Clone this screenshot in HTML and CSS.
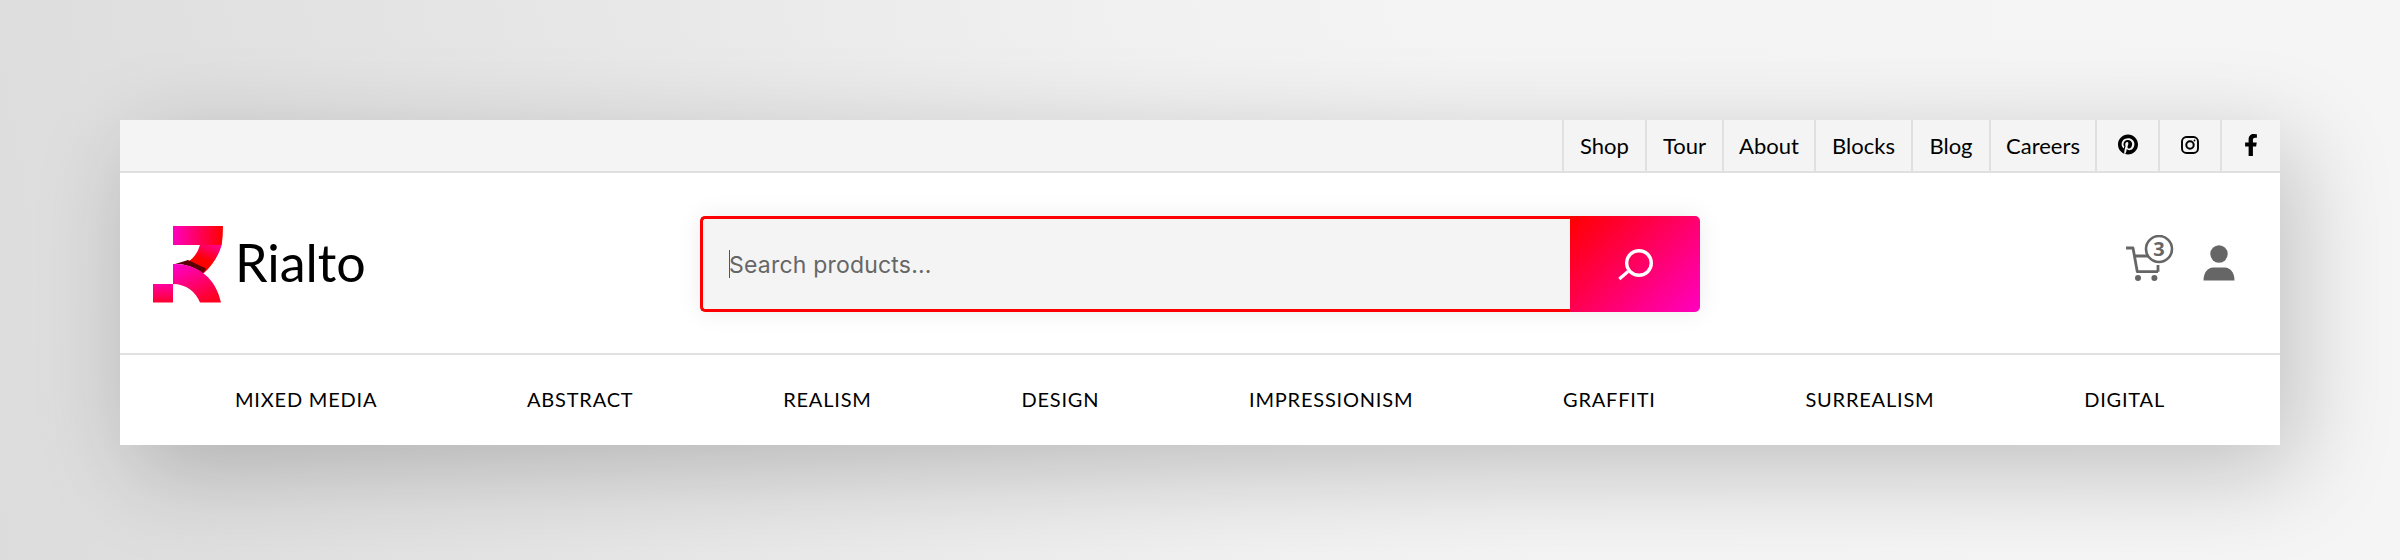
FILE: index.html
```html
<!DOCTYPE html>
<html lang="en">
<head>
    <meta charset="UTF-8">
    <meta name="viewport" content="width=device-width, initial-scale=1.0">
    <title>Rialto</title>
    <link rel="stylesheet" href="styles.css">
</head>
<body>
    <div class="site-header">
        <div class="topbar">
            <a class="top-link" href="#">Shop</a>
            <a class="top-link" href="#">Tour</a>
            <a class="top-link" href="#">About</a>
            <a class="top-link" href="#">Blocks</a>
            <a class="top-link" href="#">Blog</a>
            <a class="top-link" href="#">Careers</a>
            <a class="top-icon" href="#">
                <svg class="pinterest" viewBox="0 0 496 512"><path d="M496 256c0 137-111 248-248 248-25.6 0-50.2-3.9-73.4-11.1 10.1-16.5 25.2-43.5 30.8-65 3-11.6 15.4-59 15.4-59 8.1 15.4 31.7 28.5 56.8 28.5 74.8 0 128.7-68.8 128.7-154.3 0-81.9-66.9-143.2-152.9-143.2-107 0-163.9 71.8-163.9 150.1 0 36.4 19.4 81.7 50.3 96.1 4.7 2.2 7.2 1.2 8.3-3.3.8-3.4 5-20.3 6.9-28.1.6-2.5.3-4.7-1.7-7.1-10.1-12.5-18.3-35.3-18.3-56.6 0-54.7 41.4-107.6 112-107.6 60.9 0 103.6 41.5 103.6 100.9 0 67.1-33.9 113.6-78 113.6-24.3 0-42.6-20.1-36.7-44.8 7-29.5 20.5-61.3 20.5-82.6 0-19-10.2-34.9-31.4-34.9-24.9 0-44.9 25.7-44.9 60.2 0 22 7.4 36.8 7.4 36.8s-24.5 103.8-29 123.2c-5 21.4-3 51.6-.9 71.2C65.4 450.9 0 361.1 0 256 0 119 111 8 248 8s248 111 248 248z"/></svg>
            </a>
            <a class="top-icon" href="#">
                <svg class="instagram" viewBox="0 0 18 18"><rect x="1" y="1" width="16" height="16" rx="4.5" fill="none" stroke="#000" stroke-width="1.9"/><circle cx="9" cy="9" r="3.7" fill="none" stroke="#000" stroke-width="2"/><circle cx="13.5" cy="4.5" r="0.9"/></svg>
            </a>
            <a class="top-icon" href="#">
                <svg class="facebook" viewBox="0 0 320 512"><path d="M279.14 288l14.22-92.66h-88.91v-60.13c0-25.35 12.42-50.06 52.24-50.06h40.42V6.26S260.43 0 225.36 0c-73.22 0-121.08 44.38-121.08 124.72v70.62H22.89V288h81.39v224h100.17V288z"/></svg>
            </a>
        </div>

        <div class="mainbar">
            <a class="logo" href="#">
                <svg class="logo-mark" viewBox="0 0 70 77">
                    <defs>
                        <linearGradient id="barGrad" x1="0" y1="0" x2="1" y2="0"><stop offset="0" stop-color="#ff00c0"/><stop offset="1" stop-color="#ff0000"/></linearGradient>
                        <linearGradient id="swooshGrad" x1="0.9" y1="0" x2="0.4" y2="1"><stop offset="0" stop-color="#ff0090"/><stop offset="0.6" stop-color="#ff0000"/></linearGradient>
                        <linearGradient id="archGrad" x1="0.1" y1="0" x2="0.7" y2="1"><stop offset="0" stop-color="#ff00c8"/><stop offset="1" stop-color="#ff0020"/></linearGradient>
                        <linearGradient id="squareGrad" x1="0" y1="0" x2="0" y2="1"><stop offset="0" stop-color="#ff00a0"/><stop offset="1" stop-color="#ff0030"/></linearGradient>
                    </defs>
                    <path fill="url(#barGrad)" d="M20 0H70Q70 10 68.7 19H20Z"/>
                    <path fill="url(#swooshGrad)" d="M47 19H68.7Q64 35 51 47L35 36Q44 30 47 19Z"/>
                    <path fill="#5c0008" d="M22 38Q29 36 35 34L53 42.5 50 47.5Q38 38 22 38Z"/>
                    <path fill="url(#archGrad)" d="M20 38C44 37 63 52 68 76.5H47C43 66 33 58 20 58Z"/>
                    <path fill="url(#squareGrad)" d="M0 58H20V76.5H0Z"/>
                </svg>
                <span class="logo-name">Rialto</span>
            </a>

            <form class="search">
                <div class="search-field">
                    <input class="search-input" type="text" placeholder="Search products...">
                    <span class="search-caret"></span>
                </div>
                <button class="search-btn" type="button">
                    <svg viewBox="0 0 38 38" width="38" height="38"><circle cx="23" cy="18" r="12.3" fill="none" stroke="#fff" stroke-width="3.4"/><path d="M12 26.500 3.300 34" fill="none" stroke="#fff" stroke-width="3.2"/></svg>
                </button>
            </form>

            <div class="user-tools">
                <svg class="cart" viewBox="0 0 49 46">
                    <path d="M1 13H8L12.300 36.700H33" fill="none" stroke="#666" stroke-width="2.8" stroke-linejoin="round"/>
                    <path d="M10 21H24M33 30V36.700" fill="none" stroke="#666" stroke-width="2.8"/>
                    <circle cx="13" cy="43" r="3"/>
                    <circle cx="29.400" cy="43" r="3"/>
                    <circle cx="34" cy="14" r="13" fill="#fff" stroke="#666" stroke-width="2.600"/>
                    <text x="34" y="21" text-anchor="middle" class="cart-count">3</text>
                </svg>
                <svg class="person" viewBox="0 0 32 36"><circle cx="16" cy="9" r="8.700"/><path d="M0.500 35.500C0.500 27 5 23 10 22.500H22C27 23 31.500 27 31.500 35.500Z"/></svg>
            </div>
        </div>

        <nav class="catnav">
            <a href="#">MIXED MEDIA</a>
            <a href="#">ABSTRACT</a>
            <a href="#">REALISM</a>
            <a href="#">DESIGN</a>
            <a href="#">IMPRESSIONISM</a>
            <a href="#">GRAFFITI</a>
            <a href="#">SURREALISM</a>
            <a href="#">DIGITAL</a>
        </nav>
    </div>
</body>
</html>
```

FILE: styles.css
```css
* {
    margin: 0;
    padding: 0;
    box-sizing: border-box;
}
html, body {
    height: 560px;
    overflow: hidden;
}
body {
    padding: 120px;
    font-family: Lato, "Noto Sans", sans-serif;
    background: linear-gradient(80deg, #dcdcdc 0%, #e6e6e6 25%, #f1f1f1 50%, #f4f4f4 62%, #f5f5f5 100%);
}
a {
    color: #000;
    text-decoration: none;
}
.site-header {
    background: #fff;
    box-shadow: 15px 25px 90px rgba(0, 0, 0, 0.22);
}
.topbar {
    display: grid;
    grid-template-columns: 83px 77px 92px 97px 78px 106px 63px 62px 60px;
    justify-content: end;
    height: 53px;
    background: #f4f4f4;
    border-bottom: 2px solid #e0e0e0;
}
.top-link, .top-icon {
    display: flex;
    align-items: center;
    justify-content: center;
    border-left: 2px solid #e0e0e0;
    font-size: 22px;
}
.top-link {
    padding-bottom: 1px;
}
.top-icon {
    padding-bottom: 2px;
}
.pinterest {
    width: 20px;
    height: 21px;
}
.instagram {
    width: 18px;
    height: 18px;
}
.facebook {
    width: 14px;
    height: 22px;
}
.mainbar {
    display: flex;
    align-items: center;
    height: 182px;
    padding: 2px 45px 0 33px;
    border-bottom: 2px solid #e0e0e0;
}
.logo {
    display: flex;
    align-items: center;
    gap: 12px;
    width: 547px;
}
.logo-mark {
    width: 70px;
    height: 77px;
}
.logo-name {
    margin-bottom: 4px;
    font-size: 52px;
    line-height: 1;
}
.search {
    display: flex;
    width: 1000px;
    height: 96px;
    margin-right: auto;
    border-radius: 5px;
    box-shadow: 0 0 24px rgba(0, 0, 0, 0.08);
}
.search-field {
    position: relative;
    flex: 1;
}
.search-input {
    width: 100%;
    height: 100%;
    padding: 1px 26px 0;
    background: #f4f4f4;
    border: 3px solid #ff0000;
    border-right: 0;
    border-radius: 5px 0 0 5px;
    font-family: Inter, sans-serif;
    font-size: 23px;
    letter-spacing: 0.2px;
    outline: none;
}
.search-input::placeholder {
    color: #666;
    opacity: 1;
}
.search-caret {
    position: absolute;
    left: 29px;
    top: 34px;
    width: 1px;
    height: 28px;
    background: #555;
}
.search-btn {
    display: flex;
    align-items: center;
    justify-content: center;
    width: 130px;
    border: 0;
    border-radius: 0 5px 5px 0;
    background: linear-gradient(135deg, #ff0000 0%, #ff00c0 100%);
}
.user-tools {
    display: flex;
    align-items: flex-end;
    gap: 29px;
    padding-bottom: 12px;
}
.cart {
    width: 49px;
    height: 46px;
    fill: #666;
}
.cart-count {
    font-family: "Open Sans", sans-serif;
    font-size: 20px;
    font-weight: 700;
}
.person {
    width: 32px;
    height: 36px;
    fill: #666;
}
.catnav {
    display: flex;
    align-items: center;
    justify-content: space-between;
    height: 90px;
    padding: 0 115px 2px;
}
.catnav a {
    font-size: 20px;
    letter-spacing: 0.8px;
}
```
